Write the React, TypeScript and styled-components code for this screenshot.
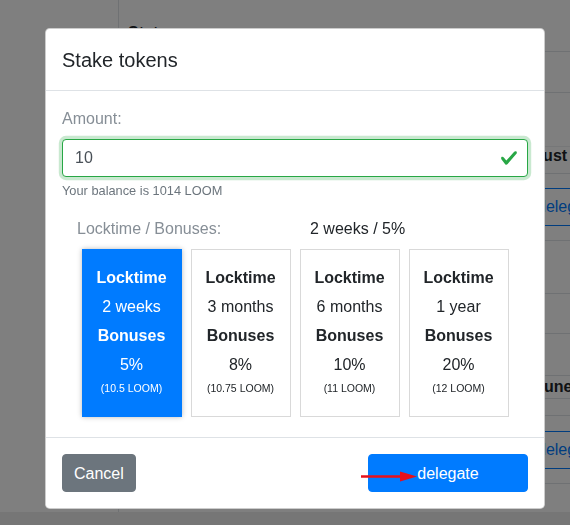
import React from 'react';
import styled, { createGlobalStyle } from 'styled-components';

const GlobalStyle = createGlobalStyle`
  * { box-sizing: border-box; }
  html, body { margin: 0; padding: 0; }
  body {
    font-family: "Liberation Sans", Arial, sans-serif;
    background: #ffffff;
    color: #212529;
    width: 570px;
    height: 525px;
    overflow: hidden;
  }
`;

/* ---------- background page ---------- */
const Page = styled.div`
  width: 570px;
  height: 525px;
  display: flex;
  flex-direction: column;
`;
const PageMain = styled.div`
  flex: 1;
  display: flex;
`;
const Sidebar = styled.div`
  width: 119px;
  flex-shrink: 0;
  border-right: 1px solid #dee2e6;
`;
const Content = styled.div`
  flex: 1;
  min-width: 0;
  display: flex;
  flex-direction: column;
`;
const TableRow = styled.div<{ $h: number; $indent: number; $faint?: boolean }>`
  height: ${(p) => p.$h}px;
  flex-shrink: 0;
  display: flex;
  align-items: center;
  padding-left: ${(p) => p.$indent}px;
  border-bottom: 1px solid ${(p) => (p.$faint ? '#eceef0' : '#dee2e6')};
  white-space: nowrap;
  overflow: hidden;
  font-size: 16px;
`;
const HeadText = styled.span`
  align-self: flex-start;
  margin-top: 24px;
  font-weight: 700;
  font-size: 16px;
`;
const CellText = styled.span<{ $shift?: number }>`
  font-weight: 700;
  margin-top: ${(p) => p.$shift ?? 0}px;
`;
const OutlineButton = styled.span`
  height: 38px;
  display: inline-flex;
  align-items: center;
  padding: 0 13px;
  border: 1px solid #007bff;
  border-radius: 4px;
  color: #007bff;
  font-size: 16px;
`;
const PageFooter = styled.div`
  height: 13px;
  background: #ececec;
`;

/* ---------- modal ---------- */
const Backdrop = styled.div`
  position: fixed;
  inset: 0;
  background: rgba(0, 0, 0, 0.5);
`;
const Dialog = styled.div`
  width: 500px;
  margin: 28px 0 0 45px;
`;
const ModalContent = styled.div`
  background: #fff;
  border: 1px solid rgba(0, 0, 0, 0.2);
  border-radius: 4.8px;
  display: flex;
  flex-direction: column;
`;
const ModalHeader = styled.div`
  padding: 17px 16px 15px;
  border-bottom: 1px solid #dee2e6;
`;
const Title = styled.h5`
  margin: 0;
  font-size: 20px;
  line-height: 29px;
  font-weight: 400;
  color: #212529;
`;
const ModalBody = styled.div`
  padding: 16px;
`;
const Label = styled.label`
  display: block;
  margin-bottom: 8px;
  font-size: 16px;
  line-height: 24px;
  color: #868e96;
`;
const InputWrap = styled.div`
  position: relative;
`;
const Input = styled.input`
  display: block;
  width: 100%;
  height: 38px;
  padding: 6px 36px 6px 12px;
  font-family: inherit;
  font-size: 16px;
  line-height: 24px;
  color: #495057;
  background: #fff;
  border: 1px solid #28a745;
  border-radius: 4px;
  outline: none;
  box-shadow: 0 0 0 3.2px rgba(40, 167, 69, 0.25);
`;
const ValidIcon = styled.svg`
  position: absolute;
  right: 10px;
  top: 10px;
  width: 18px;
  height: 18px;
`;
const Help = styled.small`
  display: block;
  margin-top: 4px;
  font-size: 12.8px;
  line-height: 19px;
  color: #6c757d;
`;
const LockRow = styled.div`
  display: grid;
  grid-template-columns: 1fr 1fr;
  margin-top: 17px;
  font-size: 16px;
  line-height: 24px;
`;
const LockCol = styled.div<{ $muted?: boolean }>`
  padding: 0 15px;
  color: ${(p) => (p.$muted ? '#868e96' : '#212529')};
`;
const Cards = styled.div`
  display: flex;
  justify-content: center;
  gap: 9px;
  margin: 8px 0 4px;
`;
const Card = styled.div<{ $active?: boolean }>`
  width: 100px;
  padding: 12.5px 0 19.5px;
  text-align: center;
  border: 1px solid ${(p) => (p.$active ? '#007bff' : '#d9d9d9')};
  background: ${(p) => (p.$active ? '#007bff' : '#fff')};
  color: ${(p) => (p.$active ? '#fff' : '#212529')};
  box-shadow: ${(p) => (p.$active ? '0 0 5px rgba(0,0,0,0.28)' : 'none')};
`;
const CardLine = styled.div<{ $bold?: boolean }>`
  font-size: 16px;
  line-height: 29px;
  font-weight: ${(p) => (p.$bold ? 700 : 400)};
`;
const CardSmall = styled.div`
  font-size: 10.5px;
  line-height: 18px;
`;
const ModalFooter = styled.div`
  padding: 16px;
  border-top: 1px solid #dee2e6;
  display: flex;
  justify-content: space-between;
  align-items: center;
`;
const Button = styled.button<{ $variant: 'secondary' | 'primary' }>`
  position: relative;
  height: 38px;
  padding: 7px 11px 5px;
  font-family: inherit;
  font-size: 16px;
  line-height: 24px;
  color: #fff;
  border-radius: 4px;
  border: 1px solid ${(p) => (p.$variant === 'primary' ? '#007bff' : '#6c757d')};
  background: ${(p) => (p.$variant === 'primary' ? '#007bff' : '#6c757d')};
  width: ${(p) => (p.$variant === 'primary' ? '160px' : 'auto')};
  text-align: center;
`;
const Arrow = styled.svg`
  position: absolute;
  left: -8px;
  top: 14px;
  width: 56px;
  height: 14px;
`;

const options = [
  { time: '2 weeks', pct: '5%', loom: '(10.5 LOOM)', active: true },
  { time: '3 months', pct: '8%', loom: '(10.75 LOOM)' },
  { time: '6 months', pct: '10%', loom: '(11 LOOM)' },
  { time: '1 year', pct: '20%', loom: '(12 LOOM)' },
];

export default function App() {
  return (
    <>
      <GlobalStyle />
      <Page>
        <PageMain>
          <Sidebar />
          <Content>
            <TableRow $h={52} $indent={9}>
              <HeadText>Status</HeadText>
            </TableRow>
            <TableRow $h={41} $indent={398} />
            <TableRow $h={54} $indent={398} $faint />
            <TableRow $h={27} $indent={393}>
              <CellText $shift={-8}>August 2</CellText>
            </TableRow>
            <TableRow $h={67} $indent={404}>
              <OutlineButton>delegate</OutlineButton>
            </TableRow>
            <TableRow $h={53} $indent={398} />
            <TableRow $h={40} $indent={398} />
            <TableRow $h={42} $indent={398} />
            <TableRow $h={23} $indent={416}>
              <CellText>June</CellText>
            </TableRow>
            <TableRow $h={17} $indent={398} />
            <TableRow $h={68} $indent={404}>
              <OutlineButton>delegate</OutlineButton>
            </TableRow>
          </Content>
        </PageMain>
        <PageFooter />
      </Page>

      <Backdrop>
        <Dialog>
          <ModalContent>
            <ModalHeader>
              <Title>Stake tokens</Title>
            </ModalHeader>
            <ModalBody>
              <Label htmlFor="amount">Amount:</Label>
              <InputWrap>
                <Input id="amount" value="10" readOnly />
                <ValidIcon viewBox="0 0 8 8">
                  <path
                    fill="#28a745"
                    d="M2.3 6.73L.6 4.53c-.4-1.04.46-1.4 1.1-.8l1.1 1.4 3.4-3.8c.6-.63 1.6-.27 1.2.7l-4 4.6c-.43.5-.8.4-1.1.1z"
                  />
                </ValidIcon>
              </InputWrap>
              <Help>Your balance is 1014 LOOM</Help>
              <LockRow>
                <LockCol $muted>Locktime / Bonuses:</LockCol>
                <LockCol>2 weeks / 5%</LockCol>
              </LockRow>
              <Cards>
                {options.map((o) => (
                  <Card key={o.time} $active={o.active}>
                    <CardLine $bold>Locktime</CardLine>
                    <CardLine>{o.time}</CardLine>
                    <CardLine $bold>Bonuses</CardLine>
                    <CardLine>{o.pct}</CardLine>
                    <CardSmall>{o.loom}</CardSmall>
                  </Card>
                ))}
              </Cards>
            </ModalBody>
            <ModalFooter>
              <Button $variant="secondary">Cancel</Button>
              <Button $variant="primary">
                delegate
                <Arrow viewBox="0 0 56 14">
                  <line x1="0" y1="7.5" x2="44" y2="7.5" stroke="#e8101a" strokeWidth="2.6" />
                  <polygon points="39,2.5 56,7.5 39,12.5" fill="#e8101a" />
                </Arrow>
              </Button>
            </ModalFooter>
          </ModalContent>
        </Dialog>
      </Backdrop>
    </>
  );
}
